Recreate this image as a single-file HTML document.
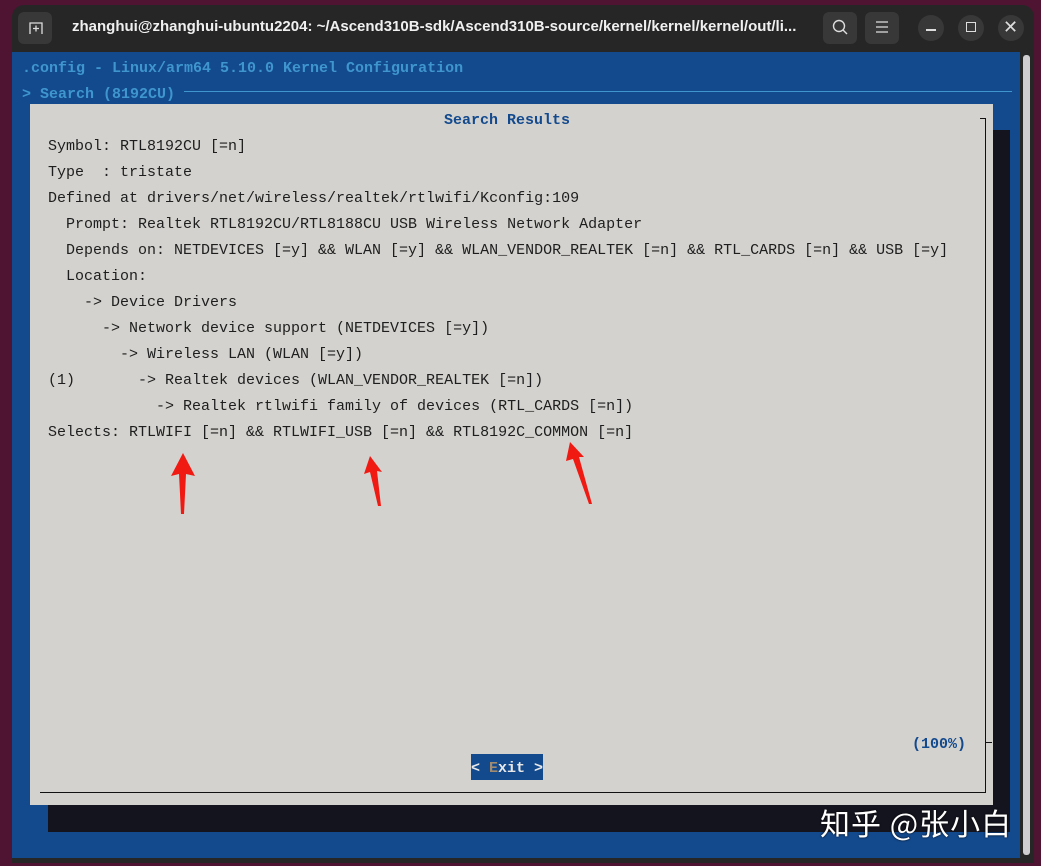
<!DOCTYPE html>
<html><head><meta charset="utf-8"><style>
body{margin:0;width:1041px;height:866px;background:#4e1431;position:relative;overflow:hidden;font-family:"Liberation Mono",monospace}
.win{position:absolute;left:12px;top:5px;width:1022px;height:858px;background:#262626;border-radius:12px 12px 0 0}
.term{position:absolute;left:12px;top:52px;width:1008px;height:806px;background:#134a8e}
.sb{position:absolute;left:1023px;top:55px;width:7px;height:800px;background:#cfcdd0;border-radius:3px}
.t{position:absolute;white-space:pre;font-size:15px;line-height:26px;color:#1e1e1e}
.title{position:absolute;left:72px;top:18px;color:#f0f0f0;font:bold 15px "Liberation Sans",sans-serif}
.btn{position:absolute;top:12px;width:34px;height:32px;background:#383838;border-radius:6px}
.cb{position:absolute;top:15px;width:26px;height:26px;background:#383838;border-radius:50%}
</style></head><body>
<div class="win"></div>
<div class="btn" style="left:18px"></div>
<svg style="position:absolute;left:28px;top:20px" width="16" height="16"><path d="M2 14V3h12v11M5 8.5h6M8 5.5v6" stroke="#ddd" stroke-width="1.3" fill="none"/></svg>
<div class="title">zhanghui@zhanghui-ubuntu2204: ~/Ascend310B-sdk/Ascend310B-source/kernel/kernel/kernel/out/li...</div>
<div class="btn" style="left:823px"></div>
<svg style="position:absolute;left:831px;top:18px" width="18" height="18"><circle cx="8" cy="8" r="5.5" stroke="#ddd" stroke-width="1.4" fill="none"/><path d="M12 12l4 4" stroke="#ddd" stroke-width="1.4"/></svg>
<div class="btn" style="left:865px"></div>
<svg style="position:absolute;left:874px;top:20px" width="16" height="14"><path d="M2 2h12M2 7h12M2 12h12" stroke="#ddd" stroke-width="1.3"/></svg>
<div class="cb" style="left:918px"></div><div style="position:absolute;left:926px;top:29px;width:10px;height:2px;background:#ddd"></div>
<div class="cb" style="left:958px"></div><div style="position:absolute;left:966px;top:22px;width:8px;height:8px;border:1.5px solid #ddd"></div>
<div class="cb" style="left:998px"></div><div style="position:absolute;left:1003px;top:17px;color:#ddd;font:18px 'DejaVu Sans'">✕</div>
<div class="term"></div>
<div class="sb"></div>
<div class="t" style="left:22px;top:56px;color:#3f96cf;font-weight:bold">.config - Linux/arm64 5.10.0 Kernel Configuration</div>
<div class="t" style="left:22px;top:82px;color:#3f96cf;font-weight:bold">&gt; Search (8192CU)</div>
<div style="position:absolute;left:184px;top:91px;width:828px;height:1px;background:#3f96cf"></div>
<div style="position:absolute;left:48px;top:130px;width:962px;height:702px;background:#14141f"></div>
<div style="position:absolute;left:30px;top:104px;width:963px;height:701px;background:#d3d2ce"></div>
<div style="position:absolute;left:985px;top:118px;width:1px;height:675px;background:#111"></div>
<div style="position:absolute;left:980px;top:118px;width:6px;height:1px;background:#111"></div>
<div style="position:absolute;left:40px;top:792px;width:946px;height:1px;background:#111"></div>
<div style="position:absolute;left:985px;top:742px;width:7px;height:1px;background:#111"></div>
<div class="t" style="left:444px;top:108px;color:#134a8e;font-weight:bold">Search Results</div>
<div class="t" style="left:48px;top:134px">Symbol: RTL8192CU [=n]
Type  : tristate
Defined at drivers/net/wireless/realtek/rtlwifi/Kconfig:109
  Prompt: Realtek RTL8192CU/RTL8188CU USB Wireless Network Adapter
  Depends on: NETDEVICES [=y] &amp;&amp; WLAN [=y] &amp;&amp; WLAN_VENDOR_REALTEK [=n] &amp;&amp; RTL_CARDS [=n] &amp;&amp; USB [=y]
  Location:
    -&gt; Device Drivers
      -&gt; Network device support (NETDEVICES [=y])
        -&gt; Wireless LAN (WLAN [=y])
(1)       -&gt; Realtek devices (WLAN_VENDOR_REALTEK [=n])
            -&gt; Realtek rtlwifi family of devices (RTL_CARDS [=n])
Selects: RTLWIFI [=n] &amp;&amp; RTLWIFI_USB [=n] &amp;&amp; RTL8192C_COMMON [=n]</div>
<div class="t" style="left:912px;top:732px;color:#134a8e;font-weight:bold">(100%)</div>
<div style="position:absolute;left:471px;top:754px;width:72px;height:26px;background:#134a8e"></div>
<div class="t" style="left:471px;top:756px;color:#e8e8e8;font-weight:bold">&lt; <span style="color:#a08a70">E</span>xit &gt;</div>
<svg style="position:absolute;left:0;top:0" width="1041" height="866">
<polygon fill="#f01a12" points="183,453 195,476 186,474 184,514 181,514 179,474 171,476"/>
<polygon fill="#f01a12" points="370,456 382,472 377,471 381,506 378,506 370,472 364,474"/>
<polygon fill="#f01a12" points="570,442 584,457 579,457 592,504 589,504 573,459 566,461"/>
</svg>
<div style="position:absolute;left:820px;top:800px;color:#fff;font:30px 'Noto Sans CJK SC',sans-serif;text-shadow:0 0 2px #000;white-space:nowrap;letter-spacing:1px">知乎 @张小白</div>
</body></html>
